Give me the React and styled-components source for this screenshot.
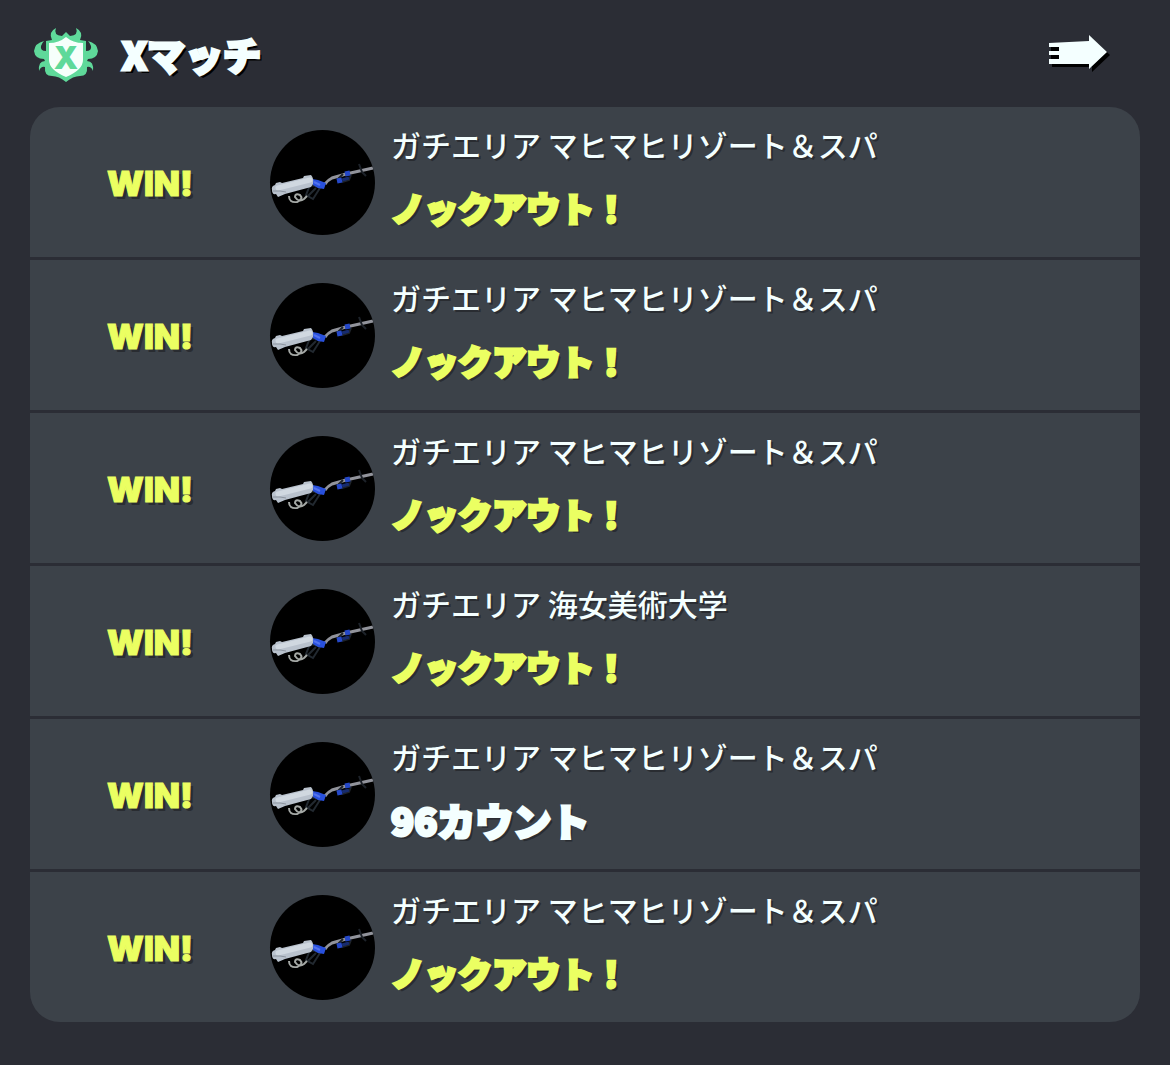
import React from "react";
import styled, { createGlobalStyle } from "styled-components";

const GlobalStyle = createGlobalStyle`
  *, *::before, *::after { box-sizing: border-box; }
  body {
    margin: 0;
    background: #2b2d35;
    color: #f4ffff;
    font-family: "Noto Sans CJK JP", sans-serif;
  }
`;

const Page = styled.main`
  padding: 16px 30px 43px;
`;

const Header = styled.header`
  display: flex;
  align-items: center;
  gap: 24px;
  height: 76px;
  margin-bottom: 15px;
  padding: 0 30px 0 4px;
`;

const Title = styled.h1`
  flex: 1;
  margin: 0;
  font-size: 38px;
  line-height: 48px;
  font-weight: 900;
  -webkit-text-stroke: 3px currentColor;
  text-shadow: 3px 3px 0 #000;
`;

const MoreLink = styled.a`
  display: flex;
  color: inherit;
`;

const List = styled.ul`
  display: flex;
  flex-direction: column;
  gap: 3px;
  margin: 0;
  padding: 0;
  list-style: none;
  border-radius: 30px;
  overflow: hidden;
`;

const Row = styled.li`
  display: grid;
  grid-template-columns: 240px 105px 1fr;
  align-items: center;
  min-height: 150px;
  background: #3c4249;
`;

const Outcome = styled.strong`
  padding-top: 4px;
  text-align: center;
  color: #ebff62;
  font-family: Inter, sans-serif;
  font-size: 34px;
  line-height: 40px;
  font-weight: 900;
  -webkit-text-stroke: 1px currentColor;
  text-shadow: 3px 3px 0 #292c31;
`;

const WeaponFrame = styled.div`
  display: flex;
  height: 105px;
  border-radius: 50%;
  background: #000;
  overflow: hidden;
`;

const Details = styled.div`
  padding: 0 0 8px 16px;
`;

const Stage = styled.p`
  margin: 0;
  font-size: 30px;
  line-height: 48px;
  font-weight: 500;
  text-shadow: 2px 2px 0 #292c31;
`;

const Score = styled.p`
  margin: 12px 0 0;
  color: ${(p) => (p.$knockout ? "#ebff62" : "#f4ffff")};
  font-size: ${(p) => (p.$knockout ? 34 : 38)}px;
  line-height: 56px;
  font-weight: 900;
  -webkit-text-stroke: 3px currentColor;
  text-shadow: 3px 3px 0 #292c31;
`;

function XBadge() {
  return (
    <svg width="64" height="56" viewBox="0 0 64 56" aria-hidden="true">
      <path
        fill="#5fd99a"
        d="M32 6 L36 10 Q45 9 42 2 Q50 6 46 14 L52 15 V25 Q58 25 57 20 Q56 17 54 15 Q63 17 64 25 Q63 33 54 33 L53 35 Q60 35 59 45 Q57 40 53 41 Q54 50 46 50 Q39 50 32 56 Q25 50 18 50 Q10 50 11 41 Q7 40 5 45 Q4 35 11 35 L10 33 Q1 33 0 25 Q1 17 10 15 Q8 17 7 20 Q6 25 12 25 V15 L18 14 Q14 6 22 2 Q19 9 28 10 Z"
      />
      <path d="M32 11 Q39 17 49 17 V34 Q49 44 32 51 Q15 44 15 34 V17 Q25 17 32 11 Z" fill="#f6fffb" />
      <text
        x="32"
        y="43"
        textAnchor="middle"
        fontFamily="Inter, sans-serif"
        fontSize="31"
        fontWeight="900"
        fill="#5fd99a"
      >
        X
      </text>
    </svg>
  );
}

function Arrow() {
  const shape = "M1 9 L41 7 V1 L59 18 L41 35 V30 H1 V25 H11 V21 H1 V17 H11 V13 H1 Z";
  return (
    <svg width="62" height="40" viewBox="0 0 62 40" aria-hidden="true">
      <path d={shape} transform="translate(3 3)" fill="#000" />
      <path d={shape} fill="#f4ffff" />
      <path d="M3 13 H11 V17 H3 Z M3 21 H11 V25 H3 Z" fill="#000" />
    </svg>
  );
}

function Charger() {
  return (
    <svg width="105" height="105" viewBox="0 0 105 105" role="img" aria-label="チャージャー">
      <g fill="none">
        <path d="M55 54 Q58 50 62 48 L76 44 L103 38" stroke="#91939b" strokeWidth="3" />
        <path d="M89 34 L92 42 L96 46 M81 45 L79 50 L72 52 M67 50 L73 44" stroke="#1d2229" strokeWidth="2" />
        <path d="M67 51 L72 50 M75 44 L80 43" stroke="#2548c8" strokeWidth="5" />
        <path d="M72 50 L79 48" stroke="#172b6e" strokeWidth="3" />
        <path d="M40 55 L46 56 L50 58 L43 69 L36 65 Z M46 58 L38 66" stroke="#222930" strokeWidth="2" />
        <path d="M19 66 Q19 73 27 72 Q34 69 30 65 Q25 63 25 67 Q29 73 34 69 L37 66" stroke="#a5a9a6" strokeWidth="2" />
      </g>
      <path d="M42 49 L48 50 L56 53 L54 59 L48 58 L43 55 Z" fill="#2850dc" />
      <path d="M44 52 L50 55" stroke="#5272ed" strokeWidth="2" />
      <path d="M2 60 Q1 56 5 55 L6 53 L10 52 L12 53 L33 48 L34 46 L41 45 Q44 48 43 54 L41 57 L15 64 L8 67 L6 64 Q2 65 2 60 Z" fill="#b9c2cd" />
      <path d="M8 58 L40 50" stroke="#d0d8e0" strokeWidth="5" strokeLinecap="round" />
      <path d="M3 61 L10 61 L16 62" stroke="#8c949f" fill="none" />
    </svg>
  );
}

const SPA = "ガチエリア マヒマヒリゾート＆スパ";
const matches = [
  { id: 1, stage: SPA, score: "ノックアウト！", knockout: true },
  { id: 2, stage: SPA, score: "ノックアウト！", knockout: true },
  { id: 3, stage: SPA, score: "ノックアウト！", knockout: true },
  { id: 4, stage: "ガチエリア 海女美術大学", score: "ノックアウト！", knockout: true },
  { id: 5, stage: SPA, score: "96カウント", knockout: false },
  { id: 6, stage: SPA, score: "ノックアウト！", knockout: true },
];

export default function App() {
  return (
    <>
      <GlobalStyle />
      <Page lang="ja">
        <Header>
          <XBadge />
          <Title>Xマッチ</Title>
          <MoreLink href="#matches" aria-label="Xマッチ">
            <Arrow />
          </MoreLink>
        </Header>
        <List id="matches">
          {matches.map((m) => (
            <Row key={m.id}>
              <Outcome>WIN!</Outcome>
              <WeaponFrame>
                <Charger />
              </WeaponFrame>
              <Details>
                <Stage>{m.stage}</Stage>
                <Score $knockout={m.knockout}>{m.score}</Score>
              </Details>
            </Row>
          ))}
        </List>
      </Page>
    </>
  );
}
